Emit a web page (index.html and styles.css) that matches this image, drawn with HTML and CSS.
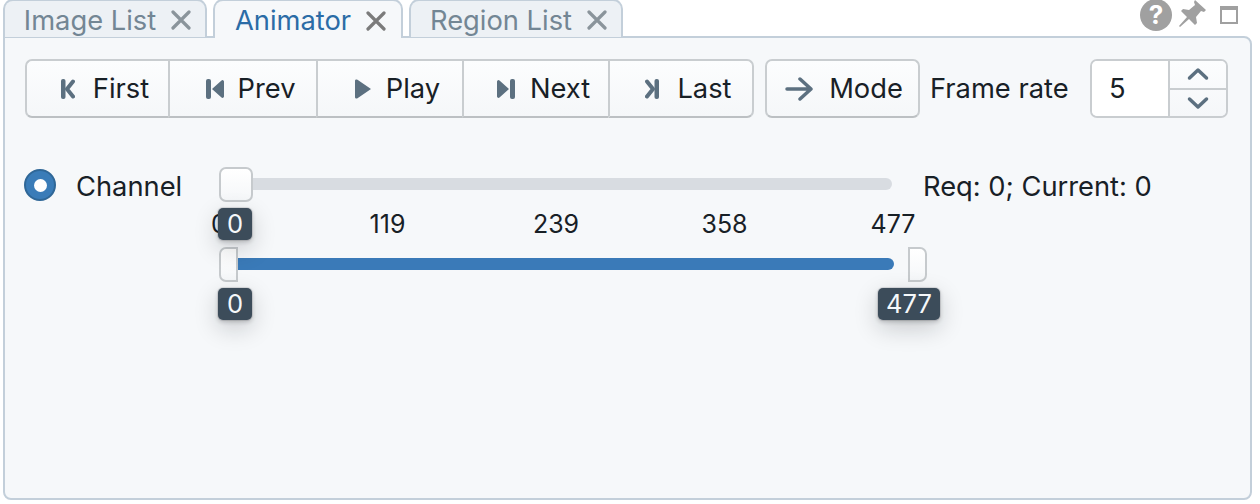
FILE: index.html
```html
<!DOCTYPE html>
<html lang="en">
<head>
  <meta charset="UTF-8">
  <title>Animator</title>
  <link rel="stylesheet" href="styles.css">
</head>
<body>
  <div class="tabbar">
    <div class="tab tab-image">Image List <svg width="20" height="20" viewBox="0 0 20 20"><path d="M2 2l16 16M18 2L2 18" stroke="#8a949b" stroke-width="3.200" stroke-linecap="round"/></svg></div>
    <div class="tab tab-animator active">Animator <svg width="20" height="20" viewBox="0 0 20 20"><path d="M2 2l16 16M18 2L2 18" stroke="#7b7b7b" stroke-width="3.200" stroke-linecap="round"/></svg></div>
    <div class="tab tab-region">Region List <svg width="20" height="20" viewBox="0 0 20 20"><path d="M2 2l16 16M18 2L2 18" stroke="#8a949b" stroke-width="3.200" stroke-linecap="round"/></svg></div>
    <div class="tab-tools">
      <span class="help">?</span>
      <svg class="pin" width="28" height="28" viewBox="0 0 28 28"><path d="M17 0l11 10-2 2-3-1-5 6 1 6-2 2-6-6-9 8-1-1 8-9-6-6 2-2 6 1 6-5-1-3z" fill="#a0a0a0"/></svg>
      <span class="maximize"></span>
    </div>
  </div>

  <div class="panel">
    <div class="toolbar">
      <div class="btn-group">
        <button class="btn btn-first">
          <svg width="14" height="20" viewBox="0 0 14 20"><rect width="4.500" height="20" rx="2" fill="#5c7080"/><path d="M12 2.500L6 10l6 7.500" fill="none" stroke="#5c7080" stroke-width="4" stroke-linecap="round" stroke-linejoin="round"/></svg>
          First
        </button>
        <button class="btn btn-prev">
          <svg width="18" height="20" viewBox="0 0 18 20"><rect width="5" height="20" rx="2" fill="#5c7080"/><path d="M18 2.500v15a1.500 1.500 0 0 1-2.500 1L6 10l9.500-8.500a1.500 1.500 0 0 1 2.500 1z" fill="#5c7080"/></svg>
          Prev
        </button>
        <button class="btn btn-play">
          <svg width="16" height="20" viewBox="0 0 16 20"><path d="M0 2v16a1.500 1.500 0 0 0 2.500 1.200L16 10 2.500.8A1.500 1.500 0 0 0 0 2z" fill="#5c7080"/></svg>
          Play
        </button>
        <button class="btn btn-next">
          <svg width="18" height="20" viewBox="0 0 18 20"><rect x="13" width="5" height="20" rx="2" fill="#5c7080"/><path d="M0 2.500v15a1.500 1.500 0 0 0 2.500 1L12 10 2.500 1.500A1.500 1.500 0 0 0 0 2.500z" fill="#5c7080"/></svg>
          Next
        </button>
        <button class="btn btn-last">
          <svg width="14" height="20" viewBox="0 0 14 20"><rect x="9.500" width="4.500" height="20" rx="2" fill="#5c7080"/><path d="M2 2.500L8 10l-6 7.500" fill="none" stroke="#5c7080" stroke-width="4" stroke-linecap="round" stroke-linejoin="round"/></svg>
          Last
        </button>
      </div>
      <button class="btn btn-mode">
        <svg width="28" height="24" viewBox="0 0 28 24"><path d="M2 12h23M15 2l11 10-11 10" fill="none" stroke="#5c7080" stroke-width="3.500" stroke-linecap="round" stroke-linejoin="round"/></svg>
        Mode
      </button>
      <span class="rate-label">Frame rate</span>
      <div class="spinner">
        <div class="spinner-value">5</div>
        <div class="spinner-btns">
          <div class="spin-btn">
            <svg width="22" height="14" viewBox="0 0 22 14"><path d="M2.500 11L11 3l8.500 8" fill="none" stroke="#5c7080" stroke-width="3.500" stroke-linecap="round" stroke-linejoin="round"/></svg>
          </div>
          <div class="spin-btn">
            <svg width="22" height="14" viewBox="0 0 22 14"><path d="M2.500 3L11 11l8.500-8" fill="none" stroke="#5c7080" stroke-width="3.500" stroke-linecap="round" stroke-linejoin="round"/></svg>
          </div>
        </div>
      </div>
    </div>

    <div class="channel-row">
      <span class="radio"></span>
      <span class="channel-label">Channel</span>
      <div class="sliders">
        <div class="slider">
          <div class="track"></div>
          <div class="handle"></div>
          <div class="tip tip-top">0</div>
        </div>
        <div class="ticks">
          <span class="tick">0</span>
          <span class="tick">119</span>
          <span class="tick">239</span>
          <span class="tick">358</span>
          <span class="tick">477</span>
        </div>
        <div class="slider">
          <div class="track track-fill"></div>
          <div class="handle-left"></div>
          <div class="handle-right"></div>
          <div class="tip tip-bottom">0</div>
          <div class="tip tip-end">477</div>
        </div>
      </div>
      <span class="readout">Req: 0; Current: 0</span>
    </div>
  </div>
</body>
</html>
```

FILE: styles.css
```css
body { margin: 0; background: #fff; font-family: Inter, "Noto Sans", sans-serif; font-size: 27.3px; color: #182026; overflow: hidden; }

.tabbar { display: flex; height: 36px; padding-left: 3px; gap: 6px; position: relative; z-index: 1; }
.tab { box-sizing: border-box; height: 38px; display: flex; align-items: center; justify-content: center; gap: 15px; background: #edf1f5; color: #738694; border: 2px solid #c3cfda; border-bottom: 0; border-radius: 10px 10px 0 0; margin-top: -1px; padding: 2px 0 0 5px; }
.tab-image { width: 204px; }
.tab-animator { width: 190px; }
.tab-region { width: 214px; }
.tab.active { background: #f6f8fa; color: #2b6ca6; height: 39px; }
.tab-tools { margin-left: auto; display: flex; align-items: flex-start; padding-right: 22px; }
.help { width: 32px; height: 32px; border-radius: 50%; background: #a0a0a0; color: #fff; font-weight: 700; font-size: 26px; line-height: 31px; text-align: center; margin-top: -1px; }
.pin { margin-left: 6px; }
.maximize { box-sizing: border-box; width: 18px; height: 18px; border: 2px solid #a0a0a0; border-top-width: 4px; margin: 6px 0 0 14px; }

.panel { box-sizing: border-box; margin-left: 3px; width: 1249px; height: 464px; background: #f6f8fa; border: 2px solid #c3cfda; border-radius: 0 8px 8px 8px; padding: 21px 21px 20px 20px; }

.toolbar { display: flex; align-items: center; height: 59px; }
.btn-group { display: flex; }
.btn { box-sizing: border-box; height: 59px; display: flex; align-items: center; justify-content: center; gap: 18px; padding: 0; font: inherit; color: inherit; background: linear-gradient(#fcfdfe, #f5f7f9); border: 2px solid #c9cdd0; border-bottom-color: #bcc0c3; }
.btn-group .btn { border-right-width: 0; padding-left: 15px; }
.btn-first { width: 143px; border-radius: 7px 0 0 7px; }
.btn-prev { width: 148px; gap: 14px; }
.btn-play { width: 146px; gap: 15px; }
.btn-next { width: 146px; gap: 15px; }
.btn-last { width: 146px; border-right-width: 2px !important; border-radius: 0 7px 7px 0; }
.btn-mode { width: 155px; margin-left: 11px; border-radius: 7px; gap: 16px; padding-left: 3px; }
.rate-label { margin-left: 10px; width: 160px; }
.spinner { box-sizing: border-box; width: 138px; height: 59px; display: flex; border: 2px solid #c9cdd0; border-radius: 7px; overflow: hidden; }
.spinner-value { width: 78px; background: #fff; border-right: 2px solid #c9cdd0; padding-left: 17px; box-sizing: border-box; line-height: 56px; }
.spinner-btns { flex: 1; display: flex; flex-direction: column; background: linear-gradient(#fcfdfe, #f5f7f9); }
.spin-btn { flex: 1; display: flex; align-items: center; justify-content: center; }
.spin-btn + .spin-btn { border-top: 2px solid #c9cdd0; }

.channel-row { display: flex; align-items: flex-start; margin: 49px 0 0 -1px; }
.radio { box-sizing: border-box; width: 32px; height: 32px; border-radius: 50%; background: #3a7cb8; border: 2px solid #2f6797; position: relative; margin-top: 2px; flex: none; }
.radio::after { content: ""; position: absolute; left: 7.500px; top: 7.500px; width: 13px; height: 13px; border-radius: 50%; background: #fff; }
.channel-label { margin-left: 20px; width: 142px; line-height: 40px; flex: none; }
.sliders { width: 675px; flex: none; }
.slider { position: relative; height: 34px; }
.track { position: absolute; left: 18px; right: 1px; top: 11px; height: 12px; border-radius: 6px; background: #d8dce1; }
.track-fill { right: -1px; background: #3a7ab8; border-radius: 0 6px 6px 0; }
.handle { box-sizing: border-box; position: absolute; left: 1px; top: 0; width: 34px; height: 35px; background: linear-gradient(#fff, #f5f7f9); border: 2px solid #c6cacd; border-radius: 7px; }
.handle-left, .handle-right { box-sizing: border-box; position: absolute; top: 0; width: 19px; height: 35px; background: linear-gradient(#fff, #f5f7f9); border: 2px solid #c6cacd; }
.handle-left { left: 1px; border-radius: 7px 0 0 7px; }
.handle-right { left: 690px; border-radius: 0 7px 7px 0; }
.tip { position: absolute; z-index: 1; height: 32px; line-height: 31px; text-align: center; background: #3c4c5a; color: #f5f8fa; border-radius: 5px; font-size: 25.500px; box-shadow: 0 0 0 1px rgba(16,22,26,.1), 0 2px 4px rgba(16,22,26,.2), 0 8px 24px rgba(16,22,26,.2); }
.tip-top { left: 0; top: 41px; width: 34px; }
.tip-bottom { left: 0; top: 41px; width: 34px; }
.tip-end { left: 660px; top: 41px; width: 62px; }
.ticks { display: flex; justify-content: space-between; height: 46px; align-items: center; margin-left: 1px; }
.tick { width: 0; display: flex; justify-content: center; font-size: 25px; }
.readout { margin-left: 30px; line-height: 40px; white-space: nowrap; }
```
